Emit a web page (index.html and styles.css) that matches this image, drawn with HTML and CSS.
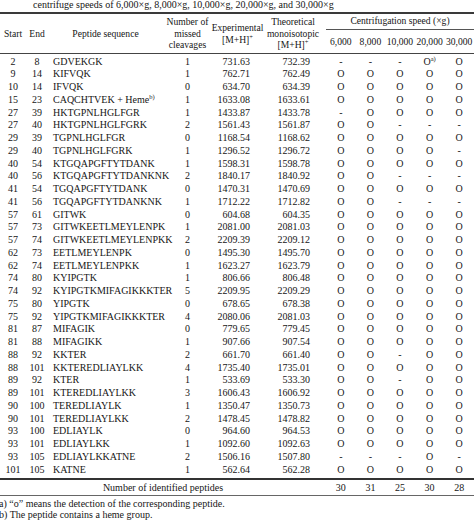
FILE: index.html
```html
<!DOCTYPE html>
<html>
<head>
<meta charset="utf-8">
<link rel="stylesheet" href="styles.css">
</head>
<body>
<div class="caption">centrifuge speeds of 6,000×g, 8,000×g, 10,000×g, 20,000×g, and 30,000×g</div>
<table class="tbl">
<colgroup>
<col class="c-start"><col class="c-end"><col class="c-pep"><col class="c-miss"><col class="c-exp"><col class="c-theo">
<col class="c-sp"><col class="c-sp"><col class="c-sp"><col class="c-sp"><col class="c-sp">
</colgroup>
<thead>
<tr>
<th rowspan="2" class="hb"><div class="hc">Start</div></th>
<th rowspan="2" class="hb"><div class="hc">End</div></th>
<th rowspan="2" class="hb"><div class="hc">Peptide sequence</div></th>
<th rowspan="2" class="hb"><div class="hc"><span>Number of</span><span>missed</span><span>cleavages</span></div></th>
<th rowspan="2" class="hb"><div class="hc exp"><span>Experimental</span><span>[M+H]<sup>+</sup></span></div></th>
<th rowspan="2" class="hb"><div class="hc theo"><span>Theoretical</span><span>monoisotopic</span><span>[M+H]<sup>+</sup></span></div></th>
<th colspan="5" class="grp">Centrifugation speed (×g)</th>
</tr>
<tr>
<th class="hb sp">6,000</th><th class="hb sp">8,000</th><th class="hb sp">10,000</th><th class="hb sp">20,000</th><th class="hb sp">30,000</th>
</tr>
</thead>
<tbody id="rows"></tbody>
<tfoot>
<tr>
<td colspan="6" class="ft">Number of identified peptides</td>
<td class="ft">30</td><td class="ft">31</td><td class="ft">25</td><td class="ft">30</td><td class="ft">28</td>
</tr>
</tfoot>
</table>
<div class="notes">
<div>a) “o” means the detection of the corresponding peptide.</div>
<div>b) The peptide contains a heme group.</div>
</div>
<script src="script.js"></script>
</body>
</html>
```

FILE: script.js
```js
const data = [
["2","8","GDVEKGK","1","731.63","732.39","---AO"],
["9","14","KIFVQK","1","762.71","762.49","OOOOO"],
["10","14","IFVQK","0","634.70","634.39","OOOOO"],
["15","23","CAQCHTVEK + Heme","1","1633.08","1633.61","OOOOO"],
["27","39","HKTGPNLHGLFGR","1","1433.87","1433.78","-OOOO"],
["27","40","HKTGPNLHGLFGRK","2","1561.43","1561.87","OO---"],
["29","39","TGPNLHGLFGR","0","1168.54","1168.62","OOOOO"],
["29","40","TGPNLHGLFGRK","1","1296.52","1296.72","OOOO-"],
["40","54","KTGQAPGFTYTDANK","1","1598.31","1598.78","OOOOO"],
["40","56","KTGQAPGFTYTDANKNK","2","1840.17","1840.92","OO---"],
["41","54","TGQAPGFTYTDANK","0","1470.31","1470.69","OOOOO"],
["41","56","TGQAPGFTYTDANKNK","1","1712.22","1712.82","OO---"],
["57","61","GITWK","0","604.68","604.35","OOOOO"],
["57","73","GITWKEETLMEYLENPK","1","2081.00","2081.03","OOOOO"],
["57","74","GITWKEETLMEYLENPKK","2","2209.39","2209.12","OOOOO"],
["62","73","EETLMEYLENPK","0","1495.30","1495.70","OOOOO"],
["62","74","EETLMEYLENPKK","1","1623.27","1623.79","OOOOO"],
["74","80","KYIPGTK","1","806.66","806.48","OOOOO"],
["74","92","KYIPGTKMIFAGIKKKTER","5","2209.95","2209.29","OOOOO"],
["75","80","YIPGTK","0","678.65","678.38","OOOOO"],
["75","92","YIPGTKMIFAGIKKKTER","4","2080.06","2081.03","OOOOO"],
["81","87","MIFAGIK","0","779.65","779.45","OOOOO"],
["81","88","MIFAGIKK","1","907.66","907.54","OOOOO"],
["88","92","KKTER","2","661.70","661.40","OO-OO"],
["88","101","KKTEREDLIAYLKK","4","1735.40","1735.01","OOOOO"],
["89","92","KTER","1","533.69","533.30","OO-OO"],
["89","101","KTEREDLIAYLKK","3","1606.43","1606.92","OOOOO"],
["90","100","TEREDLIAYLK","1","1350.47","1350.73","OOOOO"],
["90","101","TEREDLIAYLKK","2","1478.45","1478.82","OOOOO"],
["93","100","EDLIAYLK","0","964.60","964.53","OOOOO"],
["93","101","EDLIAYLKK","1","1092.60","1092.63","OOOOO"],
["93","105","EDLIAYLKKATNE","2","1506.16","1507.80","---O-"],
["101","105","KATNE","1","562.64","562.28","OOOOO"]
];
const tb = document.getElementById("rows");
data.forEach((r, i) => {
  const tr = document.createElement("tr");
  if (i === 0) tr.className = "first";
  if (i === data.length - 1) tr.className = "last";
  const cells = [
    [r[0], "ctr"], [r[1], "ctr"], [r[2], "pep"], [r[3], "ctr"], [r[4], "num"], [r[5], "num"]
  ];
  cells.forEach(([t, c]) => {
    const td = document.createElement("td");
    td.className = c;
    if (c === "pep" && t.indexOf("Heme") >= 0) {
      td.innerHTML = t + "<sup>b)</sup>";
    } else {
      td.textContent = t;
    }
    tr.appendChild(td);
  });
  for (const ch of r[6]) {
    const td = document.createElement("td");
    td.className = "ctr";
    if (ch === "A") td.innerHTML = "O<sup>a)</sup>";
    else td.textContent = ch;
    tr.appendChild(td);
  }
  tb.appendChild(tr);
});
```

FILE: styles.css
```css
html, body {
  margin: 0;
  padding: 0;
  background: #fff;
}
body {
  width: 474px;
  height: 520px;
  overflow: hidden;
  font-family: "Liberation Serif", "Times New Roman", serif;
  font-size: 10px;
  color: #161616;
}
.caption {
  margin-top: -1px;
  padding-left: 33px;
  line-height: 12px;
  height: 12px;
  margin-bottom: 1px;
  white-space: nowrap;
}
.tbl {
  width: 474px;
  table-layout: fixed;
  border-collapse: separate;
  border-spacing: 0;
  border-top: 2px solid #3a3a3a;
}
.c-start { width: 26px; }
.c-end { width: 22px; }
.c-pep { width: 115px; }
.c-miss { width: 49px; }
.c-exp { width: 54px; }
.c-theo { width: 60px; }
.c-sp { width: 29.6px; }

th {
  font-weight: normal;
  font-size: 9.6px;
  padding: 0;
  vertical-align: middle;
  text-align: center;
  white-space: nowrap;
}
th.hb {
  border-bottom: 1px solid #444;
}
th.grp {
  line-height: 14.5px;
  border-bottom: 1px solid #555;
}
th.sp {
  line-height: 23.5px;
}
.hc {
  display: flex;
  flex-direction: column;
  align-items: center;
  line-height: 11.5px;
}
.hc.exp {
  line-height: 12px;
  padding-right: 3px;
}
.hc.theo {
  padding-right: 6px;
}
sup {
  font-size: 6.5px;
  line-height: 0;
  vertical-align: 4px;
}
td {
  padding: 0;
  line-height: 12.75px;
  white-space: nowrap;
}
td.ctr { text-align: center; }
td.pep { text-align: left; padding-left: 5px; }
td.num { text-align: right; padding-right: 16px; }
tr.first td { padding-top: 1.6px; }
tr.last td { padding-bottom: 1.6px; }
td.ft {
  border-top: 2px solid #333;
  border-bottom: 1px solid #666;
  line-height: 15px;
  text-align: center;
}
.notes {
  margin-top: 2px;
  margin-left: -1px;
  line-height: 11px;
  white-space: nowrap;
}
```
